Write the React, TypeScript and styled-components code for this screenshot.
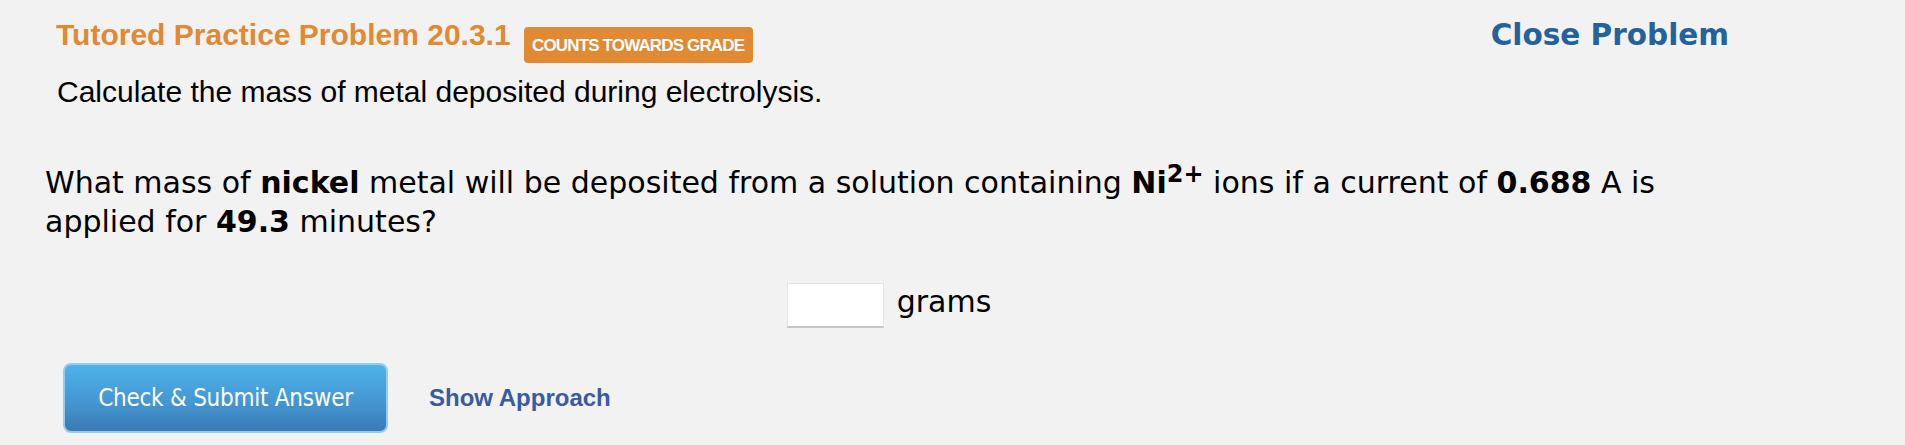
import React from "react";
import styled, { createGlobalStyle } from "styled-components";

const Global = createGlobalStyle`
  html, body { margin: 0; padding: 0; background: #f2f2f2; }
  body { font-family: "DejaVu Sans", Verdana, sans-serif; color: #000; }
`;

const Page = styled.div`
  padding: 18px 172px 0 45px;
  min-height: 445px;
  box-sizing: border-box;
`;

const HeaderRow = styled.div`
  display: flex;
  justify-content: space-between;
  align-items: flex-start;
`;

const TitleGroup = styled.div`
  display: flex;
  align-items: flex-start;
  gap: 13px;
  padding-left: 11px;
`;

const Title = styled.h1`
  margin: 0;
  font: 700 30px/34px "Liberation Sans", Arial, sans-serif;
  color: #e18a34;
`;

const Badge = styled.span`
  margin-top: 9px;
  height: 36px;
  width: 229px;
  box-sizing: border-box;
  text-align: center;
  border-radius: 4px;
  background: #e18a34;
  color: #fff;
  font: 700 17px/37px "Liberation Sans", Arial, sans-serif;
  letter-spacing: -0.85px;
  white-space: nowrap;
`;

const CloseLink = styled.a`
  margin-right: 4px;
  font: 700 29.5px/34px "DejaVu Sans", Verdana, sans-serif;
  color: #23629a;
  text-decoration: none;
  cursor: pointer;
`;

const Subtitle = styled.p`
  margin: 12px 0 0;
  padding-left: 12px;
  font: 400 30px/34px "Liberation Sans", Arial, sans-serif;
`;

const Question = styled.p`
  margin: 54px 0 0;
  font: 400 30px/39px "DejaVu Sans", Verdana, sans-serif;
  b { font-weight: 700; }
  sup {
    font-size: 0.8em;
    line-height: 0;
    vertical-align: 0.45em;
    font-weight: 700;
  }
`;

const AnswerRow = styled.div`
  margin-top: 42px;
  display: flex;
  justify-content: center;
  align-items: flex-start;
  gap: 13px;
`;

const AnswerInput = styled.input`
  width: 97px;
  height: 45px;
  box-sizing: border-box;
  border: 1px solid #e4e4e4;
  border-bottom: 2px solid #c8c8c8;
  background: #fff;
  outline: none;
  font: 400 24px "DejaVu Sans", sans-serif;
`;

const Unit = styled.span`
  margin-top: 1px;
  font: 400 30px/35px "DejaVu Sans", Verdana, sans-serif;
`;

const ActionRow = styled.div`
  margin-top: 35px;
  padding-left: 18px;
  display: flex;
  align-items: center;
  gap: 41px;
`;

const SubmitButton = styled.button`
  width: 325px;
  height: 70px;
  box-sizing: border-box;
  border: 2px solid #90cdf0;
  border-radius: 8px;
  background: linear-gradient(to bottom, #4fb2ea 0%, #4597d2 55%, #3a7ab3 100%);
  color: #fff;
  font: 400 24px "DejaVu Sans Condensed", "DejaVu Sans", sans-serif;
  letter-spacing: -0.25px;
  cursor: pointer;
  padding: 0;
`;

const ApproachLink = styled.a`
  font: 700 24px/30px "Liberation Sans", Arial, sans-serif;
  color: #3a5b9e;
  text-decoration: none;
  cursor: pointer;
`;

export default function App() {
  return (
    <>
      <Global />
      <Page>
        <HeaderRow>
          <TitleGroup>
            <Title>Tutored Practice Problem 20.3.1</Title>
            <Badge>COUNTS TOWARDS GRADE</Badge>
          </TitleGroup>
          <CloseLink>Close Problem</CloseLink>
        </HeaderRow>
        <Subtitle>Calculate the mass of metal deposited during electrolysis.</Subtitle>
        <Question>
          What mass of <b>nickel</b> metal will be deposited from a solution containing{" "}
          <b>Ni</b>
          <sup>2+</sup> ions if a current of <b>0.688</b> A is applied for <b>49.3</b> minutes?
        </Question>
        <AnswerRow>
          <AnswerInput type="text" aria-label="answer" />
          <Unit>grams</Unit>
        </AnswerRow>
        <ActionRow>
          <SubmitButton>Check &amp; Submit Answer</SubmitButton>
          <ApproachLink>Show Approach</ApproachLink>
        </ActionRow>
      </Page>
    </>
  );
}
